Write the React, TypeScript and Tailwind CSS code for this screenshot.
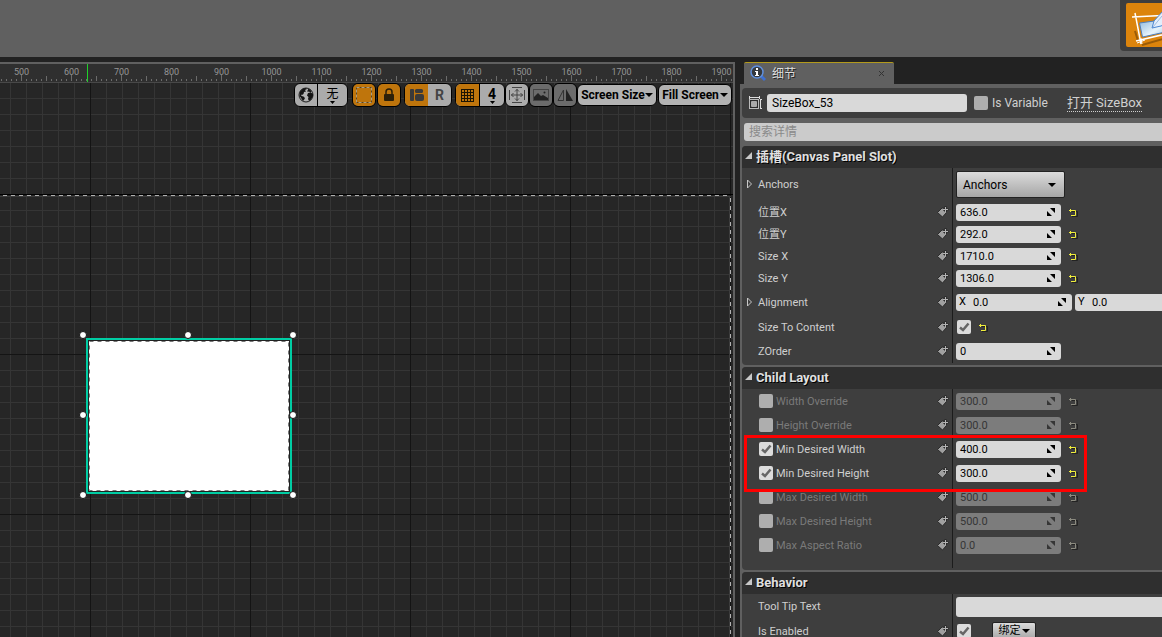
import React, { useState } from 'react';

const RULER_MARKS = [500, 600, 700, 800, 900, 1000, 1100, 1200, 1300, 1400, 1500, 1600, 1700, 1800, 1900];

const BindIcon = () => (
  <svg width="12" height="12" viewBox="0 0 12 12" className="shrink-0" aria-hidden="true">
    <path d="M0.500 6.500L5 2h2v2.500h2.500v2L5.500 11z" fill="#a0a0a0" stroke="#2a2a2a" />
    <path d="M8.500 0v6M6 3.500h5.500" stroke="#2a2a2a" strokeWidth="2" />
    <path d="M8.500 1v5M6 3.500h5" stroke="#b4b4b4" strokeWidth="1" />
  </svg>
);

const SpinIcon = () => (
  <svg width="8" height="8" viewBox="0 0 8 8" className="shrink-0" aria-hidden="true">
    <path d="M3 0h5v5zM0 3v5h5z" fill="currentColor" />
  </svg>
);

const ResetButton = ({ name, disabled }: { name: string; disabled?: boolean }) => (
  <button type="button" aria-label={`Reset ${name}`} disabled={disabled} className={disabled ? 'text-[#8c8b80]' : 'text-[#f0ee3c]'}>
    <svg width="9" height="9" viewBox="0 0 9 9" fill="none" aria-hidden="true">
      <path d="M3 3.500h5.500v5H3" stroke="#222" />
      <path d="M1 2.500h5.500v5H2" stroke="currentColor" />
      <path d="M0 2h1v-1h1v3H1V3H0z" fill="currentColor" />
    </svg>
  </button>
);

const CaretDown = () => (
  <svg width="8" height="4" viewBox="0 0 8 4" aria-hidden="true">
    <path d="M0 0h8L4 4z" fill="#000" />
  </svg>
);

const CaretSmall = () => (
  <svg width="5" height="3" viewBox="0 0 5 3" aria-hidden="true">
    <path d="M0 0h5L2.500 3z" fill="#000" />
  </svg>
);

type CheckProps = { id: string; label?: string; defaultChecked?: boolean };

const Check = ({ id, label, defaultChecked = false }: CheckProps) => {
  const [checked, setChecked] = useState(defaultChecked);
  return (
    <span className="relative flex h-3.5 w-3.5 shrink-0">
      <input
        id={id}
        type="checkbox"
        aria-label={label}
        checked={checked}
        onChange={(e) => setChecked(e.target.checked)}
        className="h-3.5 w-3.5 appearance-none rounded-xs bg-[#aeaeae] checked:bg-[#dcdcdc]"
      />
      {checked && (
        <svg viewBox="0 0 14 14" className="pointer-events-none absolute inset-0" aria-hidden="true">
          <path d="M3 7.500l3 2.500 5.500-6.500" fill="none" stroke="#666" strokeWidth="2.500" />
        </svg>
      )}
    </span>
  );
};

type NumberFieldProps = { id?: string; label?: string; value: string; prefix?: string; disabled?: boolean; wide?: boolean };

const NumberField = ({ id, label, value, prefix, disabled, wide }: NumberFieldProps) => (
  <div
    className={`flex h-[17px] shrink-0 items-center rounded-[3px] pr-1.5 ${prefix ? 'pl-[3px]' : 'pl-1'} ${wide ? 'w-[116px]' : 'w-[105px]'} ${
      disabled ? 'bg-[#7c7c7c] text-[#363636]' : 'bg-[#d9d9d9] text-black'
    }`}
  >
    {prefix && <span className="w-3.5">{prefix}</span>}
    <input id={id} aria-label={label} defaultValue={value} disabled={disabled} className="h-full w-0 min-w-0 flex-1 outline-none" />
    <SpinIcon />
  </div>
);

type RowProps = {
  label: string;
  htmlFor?: string;
  height?: string;
  expandable?: boolean;
  bind?: boolean;
  check?: React.ReactNode;
  disabled?: boolean;
  children: React.ReactNode;
};

const Row = ({ label, htmlFor, height = 'h-6', expandable, bind = true, check, disabled, children }: RowProps) => (
  <div className={`flex ${height}`}>
    <div className="flex w-[211px] shrink-0 items-center border-r border-[#1c1c1c] pr-[3px]">
      <span className="flex w-4 shrink-0 pl-1">
        {expandable && (
          <svg width="7" height="11" viewBox="0 0 7 11" aria-hidden="true">
            <path d="M1.500 1v8l4-4z" fill="none" stroke="#c8c8c8" />
          </svg>
        )}
      </span>
      {check && <span className="mr-[3px] ml-px flex">{check}</span>}
      <label htmlFor={htmlFor} className={`flex-1 pt-[2px] whitespace-nowrap ${disabled ? 'text-[#7a7a7a]' : 'text-[#cfcfcf]'}`}>
        {label}
      </label>
      {bind && <BindIcon />}
    </div>
    <div className="flex flex-1 items-center pl-[3px]">{children}</div>
  </div>
);

const Section = ({ title, children }: { title: string; children: React.ReactNode }) => (
  <section className="relative mb-[2px] rounded-l-sm bg-[#3e3e3e]">
    <h2 className="flex h-[22px] items-center gap-1 rounded-tl-sm bg-[#2f2f2f] pl-[3px] text-[13px] font-bold text-[#e0e0e0] text-shadow-[1px_1px_0_#000]">
      <svg width="7" height="10" viewBox="0 0 7 10" aria-hidden="true">
        <path d="M7 0v7H0z" fill="#c8c8c8" />
      </svg>
      {title}
    </h2>
    {children}
  </section>
);

const CHILD_ROWS = [
  { name: 'Width Override', value: '300.0', on: false },
  { name: 'Height Override', value: '300.0', on: false },
  { name: 'Min Desired Width', value: '400.0', on: true },
  { name: 'Min Desired Height', value: '300.0', on: true },
  { name: 'Max Desired Width', value: '500.0', on: false },
  { name: 'Max Desired Height', value: '500.0', on: false },
  { name: 'Max Aspect Ratio', value: '0.0', on: false },
];

const SLOT_ROWS = [
  { name: '位置X', value: '636.0' },
  { name: '位置Y', value: '292.0' },
  { name: 'Size X', value: '1710.0' },
  { name: 'Size Y', value: '1306.0' },
];

const Ruler = () => (
  <div className="relative h-[18px] overflow-hidden bg-[#2f2f2f]">
    <svg className="absolute inset-0 h-full w-full" aria-hidden="true">
      <defs>
        <pattern id="ticks" x="21" width="50" height="18" patternUnits="userSpaceOnUse">
          <path
            d="M.5 11v6M5.500 15v2M10.500 15v2M15.500 15v2M20.500 15v2M25.500 12v5M30.500 15v2M35.500 15v2M40.500 15v2M45.500 15v2"
            stroke="#6c6c6c"
          />
        </pattern>
      </defs>
      <rect width="100%" height="100%" fill="url(#ticks)" />
      <path d="M87.500 0v18" stroke="#1fd02a" />
    </svg>
    <div className="relative -ml-1 flex">
      {RULER_MARKS.map((mark) => (
        <span key={mark} className="w-[50px] shrink-0 pt-px pl-px text-center text-[9px] leading-[14px] text-[#959595]">
          {mark}
        </span>
      ))}
    </div>
  </div>
);

const toolBox = 'flex h-6 overflow-hidden rounded-[6px] border border-black bg-[#ababab]';
const tool = 'flex h-full w-[22px] items-center justify-center';

const ViewportToolbar = () => (
  <div className="relative flex items-center justify-end pr-px text-black">
    <div className={`${toolBox} mr-1`}>
      <button type="button" aria-label="Localization" className="flex h-full w-[23px] items-center justify-center border-r border-black">
        <svg width="16" height="16" viewBox="0 0 16 16" aria-hidden="true">
          <circle cx="8" cy="8" r="7" fill="#b4b4b4" stroke="#1c1c1c" />
          <path
            d="M2 4.500L5 1.500 8 1l1 1-2 1 1 1.500-2 .5-.5 2L4 8l-1-.5.5 1.500 2 .5 1.500 1.500-1 2L5 14l-2-3-1.500-2zM10.500 1.500l2 1.500 1 2-1.500.5-1-1-1.500.5V3.500zM10 6l3-.5 2 1.500v2l-2 3.500-2 1.500-1-2 .5-2L9 8.500z"
            fill="#151515"
          />
        </svg>
      </button>
      <button type="button" className="flex h-full w-[29px] flex-col items-center justify-center text-xs leading-[14px]">
        无
        <CaretSmall />
      </button>
    </div>
    <div className={`${toolBox} mr-px`}>
      <button type="button" aria-label="Show outlines" className={`${tool} bg-[#bf750c]`}>
        <svg width="18" height="18" viewBox="0 0 18 18" fill="none" aria-hidden="true">
          <rect x="1.500" y="1.500" width="15" height="15" stroke="#5d4218" />
          <rect x="1.500" y="1.500" width="15" height="15" stroke="#a99c84" strokeDasharray="3 2" />
        </svg>
      </button>
    </div>
    <div className={`${toolBox} mr-[3px]`}>
      <button type="button" aria-label="Respect locks" className={`${tool} bg-[#bf750c]`}>
        <svg width="12" height="14" viewBox="0 0 12 14" aria-hidden="true">
          <path d="M3 7V4a3 3 0 016 0v3" fill="none" stroke="#2d2009" strokeWidth="1.500" />
          <rect x="1" y="6" width="10" height="7" rx="1" fill="#2d2009" />
        </svg>
      </button>
    </div>
    <div className={`${toolBox} mr-[3px]`}>
      <button type="button" aria-label="Layout transform" className="flex h-full w-[23px] items-center justify-center bg-[#bf750c]">
        <svg width="16" height="14" viewBox="0 0 16 14" fill="#3a3a3a" aria-hidden="true">
          <rect x="1" y="1" width="4" height="12" rx="1" />
          <rect x="6" y="1" width="8" height="4" rx="1.500" />
          <rect x="6" y="6" width="9" height="7" rx="2" />
        </svg>
      </button>
      <button type="button" className="h-full w-[23px] text-sm font-bold text-[#444]">R</button>
    </div>
    <div className={toolBox}>
      <button type="button" aria-label="Grid snap" className="flex h-full w-[24px] items-center justify-center border-r border-black bg-[#bf750c]">
        <svg width="13" height="13" viewBox="0 0 13 13" aria-hidden="true">
          <path d="M.5 0v13M3.500 0v13M6.500 0v13M9.500 0v13M12.500 0v13M0 .5h13M0 3.500h13M0 6.500h13M0 9.500h13M0 12.500h13" stroke="#1c1403" />
        </svg>
      </button>
      <button type="button" className="flex h-full w-[24px] flex-col items-center justify-center text-sm font-bold leading-[14px]">
        4
        <CaretSmall />
      </button>
    </div>
    <div className={toolBox}>
      <button type="button" aria-label="Zoom to fit" className={tool}>
        <svg width="18" height="18" viewBox="0 0 18 18" fill="none" stroke="#444" aria-hidden="true">
          <path d="M4 1.500h10M4 16.500h10M1.500 4v10M16.500 4v10M9 3v12M3 9h12M7 5.500l2-2 2 2M7 12.500l2 2 2-2M5.500 7l-2 2 2 2M12.500 7l2 2-2 2" />
        </svg>
      </button>
    </div>
    <div className={toolBox}>
      <button type="button" aria-label="Preview background" className={`${tool} bg-[#6b6b6b]`}>
        <svg width="18" height="14" viewBox="0 0 18 14" aria-hidden="true">
          <rect x="1.500" y="1.500" width="15" height="11" fill="none" stroke="#444" />
          <path d="M2 12V9l4-4 3 3 2-1 5 3v2z" fill="#222" />
          <circle cx="12.500" cy="4.500" r="1" fill="#222" />
        </svg>
      </button>
    </div>
    <div className={toolBox}>
      <button type="button" aria-label="Flow direction" className={`${tool} bg-[#6b6b6b]`}>
        <svg width="18" height="14" viewBox="0 0 18 14" aria-hidden="true">
          <path d="M7.500 2v10.500H2z" fill="none" stroke="#333" />
          <path d="M10 1v12h7z" fill="#222" />
        </svg>
      </button>
    </div>
    <button type="button" className="mr-px flex h-[22px] w-20 items-center justify-center rounded-[6px] border border-black bg-[#b2b2b2] text-xs font-bold whitespace-nowrap">
      Screen Size
      <CaretDown />
    </button>
    <button type="button" className="flex h-[22px] w-[74px] items-center justify-center gap-px rounded-[6px] border border-black bg-[#b2b2b2] text-xs font-bold whitespace-nowrap">
      Fill Screen
      <CaretDown />
    </button>
  </div>
);

const HANDLES = [
  [83, 252], [188, 252], [293, 252],
  [83, 332], [293, 332],
  [83, 412], [188, 412], [293, 412],
];

const DesignerCanvas = () => (
  <svg className="absolute inset-0 h-full w-full" aria-hidden="true">
    <defs>
      <pattern id="grid" x="10" y="15" width="16" height="16" patternUnits="userSpaceOnUse">
        <path d="M.5 0v16M0 .5h16" stroke="#353535" />
      </pattern>
      <pattern id="gridMajor" x="90" y="111" width="160" height="160" patternUnits="userSpaceOnUse">
        <path d="M.5 0v160M0 .5h160" stroke="#141414" />
      </pattern>
    </defs>
    <rect width="100%" height="100%" fill="url(#grid)" />
    <rect width="100%" height="100%" fill="url(#gridMajor)" />

    {/* Screen bounds */}
    <line x1="0" x2="100%" y1="111.500" y2="111.500" stroke="#000" />
    <g transform="translate(-2 0)">
      <line x1="0" x2="100%" y1="113.500" y2="113.500" stroke="#3c3c3c" />
      <line x1="5" x2="100%" y1="112.500" y2="112.500" stroke="#b0b0b0" strokeDasharray="4 4" />
      <svg x="100%" overflow="visible">
        <path d="M-1.500 114v2000" stroke="#3c3c3c" />
        <path d="M-.5 115v2000" stroke="#b0b0b0" strokeDasharray="4 4" />
      </svg>
    </g>

    {/* Selected widget */}
    <rect x="87" y="256" width="204" height="154" fill="#fff" stroke="#00cda4" strokeWidth="2" />
    <rect x="88.500" y="257.500" width="201" height="151" fill="none" stroke="#222" />
    <rect x="89.500" y="258.500" width="199" height="149" fill="none" stroke="#777" strokeDasharray="4 4" />
    {HANDLES.map(([x, y]) => (
      <circle key={`${x}-${y}`} cx={x} cy={y} r="3.500" fill="#fff" stroke="#111" strokeWidth="1" />
    ))}
  </svg>
);

const Viewport = () => (
  <main className="flex min-w-0 flex-1 flex-col border-t-2 border-r-2 border-[#606060]">
    <Ruler />
    <div className="relative flex-1 overflow-hidden border-t border-[#484848] bg-[#262626]">
      <DesignerCanvas />
      <ViewportToolbar />
    </div>
  </main>
);

const DetailsPanel = () => (
  <aside className="flex w-[422px] shrink-0 flex-col text-[11px]">
    <div className="ml-1 flex h-[22px] w-[150px] shrink-0 items-center rounded-t-xs border-t border-[#b39a1c] bg-[#606060] pr-[9px] pl-1.5 text-xs text-[#dedede]">
      <svg width="17" height="17" viewBox="0 0 17 17" aria-hidden="true">
        <path d="M11 11l4 4" stroke="#3e6fd0" strokeWidth="3" />
        <circle cx="7" cy="7" r="6" fill="#35393f" stroke="#5f8fdc" strokeWidth="1.500" />
        <path d="M6 3h2v2H6zM5 6h3v4h1v1H5v-1h1V7H5z" fill="#fff" />
      </svg>
      <span className="ml-[5px] flex-1 text-shadow-[1px_1px_0_#222]">细节</span>
      <button type="button" aria-label="Close tab">
        <svg width="7" height="7" viewBox="0 0 7 7" aria-hidden="true">
          <path d="M1 1l5 5M6 1L1 6" stroke="#333" />
        </svg>
      </button>
    </div>
    <div className="flex-1 overflow-hidden border-l-2 border-[#606060] bg-[#606060] pt-1">
      <div className="flex h-[30px] items-center rounded-l-sm bg-[#3e3e3e] pl-[7px] text-xs text-[#d0d0d0]">
        <svg width="13" height="14" viewBox="0 0 13 14" aria-hidden="true">
          <path d="M0 1.500h11M.5 0v3M10.500 0v3M11 3.500h2M11 12.500h2M11.500 3v10" stroke="#ddd" fill="none" />
          <rect x=".5" y="3.500" width="9" height="9" fill="#2c2c2c" stroke="#bbb" />
          <rect x="2" y="5" width="6" height="6" rx="1" fill="#aaa" />
        </svg>
        <input aria-label="Widget name" defaultValue="SizeBox_53" className="ml-[5px] h-[18px] w-[200px] rounded-[3px] bg-[#d9d9d9] px-[5px] text-black outline-none" />
        <span className="ml-[7px] flex">
          <Check id="is-variable" />
        </span>
        <label htmlFor="is-variable" className="ml-1">Is Variable</label>
        <a href="#sizebox" className="ml-[19px] border-b border-dotted border-[#d0d0d0] text-[13px] leading-[17px] whitespace-nowrap">
          打开 SizeBox
        </a>
      </div>
      <div className="py-[5px] pl-[2px]">
        <input
          type="search"
          aria-label="搜索详情"
          placeholder="搜索详情"
          className="block h-[18px] w-full rounded-l-[3px] bg-[#cbcbcb] px-[5px] text-xs text-black outline-none placeholder:text-[#8a8a8a]"
        />
      </div>

      <Section title="插槽(Canvas Panel Slot)">
        <div className="pb-[2px]">
          <Row label="Anchors" htmlFor="anchors" height="h-[33px]" expandable bind={false}>
            <button
              id="anchors"
              type="button"
              className="flex h-[27px] w-[109px] items-center justify-between rounded-xs border border-[#222] bg-linear-to-b from-[#dcdcdc] to-[#a6a6a6] pr-2 pl-1.5 text-xs text-black"
            >
              Anchors
              <CaretDown />
            </button>
          </Row>
          {SLOT_ROWS.map(({ name, value }) => (
            <Row key={name} label={name} htmlFor={name} height="h-[22px]">
              <NumberField id={name} value={value} />
              <span className="ml-2 flex">
                <ResetButton name={name} />
              </span>
            </Row>
          ))}
          <Row label="Alignment" htmlFor="align-x" height="h-[26px]" expandable>
            <NumberField id="align-x" value="0.0" prefix="X" wide />
            <span className="ml-[3px] flex">
              <NumberField label="Alignment Y" value="0.0" prefix="Y" wide />
            </span>
          </Row>
          <Row label="Size To Content" htmlFor="size-to-content">
            <span className="ml-px flex">
              <Check id="size-to-content" defaultChecked />
            </span>
            <span className="ml-2 flex">
              <ResetButton name="Size To Content" />
            </span>
          </Row>
          <Row label="ZOrder" htmlFor="zorder">
            <NumberField id="zorder" value="0" />
          </Row>
        </div>
      </Section>

      <Section title="Child Layout">
        {CHILD_ROWS.map(({ name, value, on }) => (
          <Row key={name} label={name} htmlFor={name} disabled={!on} check={<Check id={`${name}-on`} label={`Use ${name}`} defaultChecked={on} />}>
            <NumberField id={name} value={value} disabled={!on} />
            <span className="ml-2 flex">
              <ResetButton name={name} disabled={!on} />
            </span>
          </Row>
        ))}
        <div className="h-[11px] w-[211px] border-r border-[#1c1c1c]" />
        <div className="h-[2px]" />
        {/* Highlight around the min desired size rows */}
        <div className="pointer-events-none absolute top-[68px] left-[2px] h-[57px] w-[343px] border-3 border-[#ff0000]" />
      </Section>

      <Section title="Behavior">
        <Row label="Tool Tip Text" htmlFor="tooltip" height="h-[25px]" bind={false}>
          <input id="tooltip" className="h-5 w-full rounded-l-[3px] bg-[#d9d9d9] px-1 text-black outline-none" />
        </Row>
        <Row label="Is Enabled" htmlFor="is-enabled">
          <span className="ml-px flex">
            <Check id="is-enabled" defaultChecked />
          </span>
          <button
            type="button"
            className="ml-[21px] flex h-[18px] w-11 items-center justify-center gap-px rounded-xs border border-[#222] bg-linear-to-b from-[#dcdcdc] to-[#a6a6a6] text-[11px] text-black"
          >
            绑定
            <CaretDown />
          </button>
        </Row>
      </Section>
    </div>
  </aside>
);

export default function App() {
  return (
    <div className="flex h-screen w-full flex-col overflow-hidden bg-[#222] font-['Roboto','Noto_Sans_CJK_SC',sans-serif]">
      <header className="flex h-[57px] shrink-0 items-start justify-end bg-[#606060]">
        <div className="h-[51px] w-[42px] overflow-hidden rounded-bl-sm bg-[#3e3e3e] pt-[3px] pl-1.5">
          <button type="button" aria-label="Designer" className="block h-11 w-11 rounded-xs bg-[#dc840c]">
            <svg width="44" height="44" viewBox="0 0 44 44" fill="none" aria-hidden="true">
              <defs>
                <linearGradient id="sheet" x1="0" y1="0" x2="1" y2="1">
                  <stop offset="0" stopColor="#8fb9e0" />
                  <stop offset="0.6" stopColor="#e6f3fb" />
                  <stop offset="1" stopColor="#a9cbe6" />
                </linearGradient>
              </defs>
              <path d="M16 42l24-7M9 28l3 10" stroke="#9a5c08" strokeWidth="2" />
              <path d="M13.500 20l22-3 4 12-23 5z" fill="url(#sheet)" stroke="#4c7fc0" />
              <path d="M6 14l38-2M9 10l6 31M10 38l34-8" stroke="#fff" strokeWidth="1.500" />
              <path d="M11 40l8-3M16 41l-1-6" stroke="#fff" />
              <path d="M26 25l2-7 9-10 9-4v14l-11 5z" fill="#e3eefb" stroke="#4c86d2" />
              <path d="M27 24l9-11" stroke="#9dbbe0" />
            </svg>
          </button>
        </div>
      </header>
      <div className="flex min-h-0 flex-1 gap-[5px] pt-[5px]">
        <Viewport />
        <DetailsPanel />
      </div>
    </div>
  );
}
